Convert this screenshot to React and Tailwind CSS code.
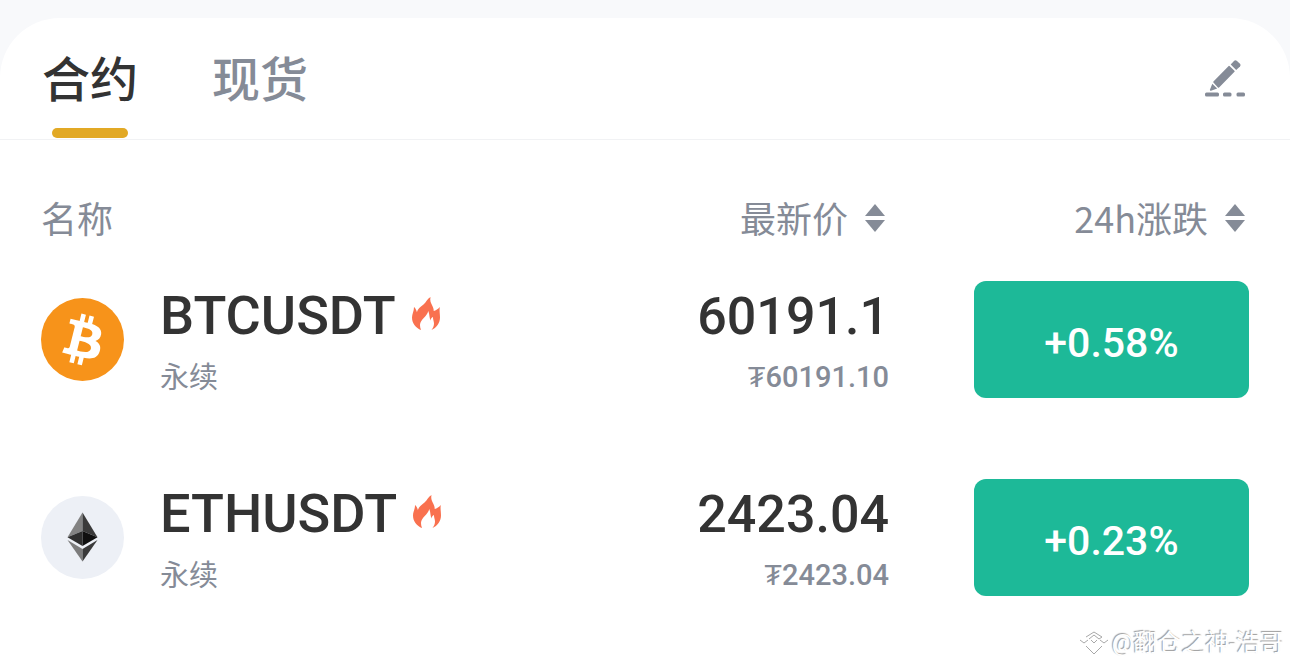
import { useState } from 'react';

const TABS = ['合约', '现货'];

const PAIRS = [
  { symbol: 'BTCUSDT', type: '永续', price: '60191.1', usdt: '₮60191.10', change: '+0.58%', Icon: BtcIcon },
  { symbol: 'ETHUSDT', type: '永续', price: '2423.04', usdt: '₮2423.04', change: '+0.23%', Icon: EthIcon },
];

function BtcIcon() {
  return (
    <svg viewBox="0 0 32 32" className="size-[83px] shrink-0" aria-hidden="true">
      <circle cx="16" cy="16" r="16" fill="#f7931a" />
      <path
        fill="#fff"
        d="M23.189 14.02c.314-2.096-1.283-3.223-3.465-3.975l.708-2.84-1.728-.43-.69 2.765c-.454-.114-.92-.22-1.385-.326l.695-2.783L15.596 6l-.708 2.839c-.376-.086-.746-.17-1.104-.26l.002-.009-2.384-.595-.46 1.846s1.283.294 1.256.312c.7.175.826.638.805 1.006l-.806 3.235c.048.012.11.03.18.057l-.183-.045-1.13 4.532c-.086.212-.303.531-.793.41.018.025-1.256-.313-1.256-.313l-.858 1.978 2.25.561c.418.105.828.215 1.231.318l-.715 2.872 1.727.43.708-2.84c.472.127.93.245 1.378.357l-.706 2.828 1.728.43.715-2.866c2.948.558 5.164.333 6.097-2.333.752-2.146-.037-3.385-1.588-4.192 1.13-.26 1.98-1.003 2.207-2.538zm-3.95 5.538c-.533 2.147-4.148.986-5.32.695l.95-3.805c1.172.293 4.929.872 4.37 3.11zm.535-5.569c-.487 1.953-3.495.96-4.47.717l.86-3.45c.975.243 4.118.696 3.61 2.733z"
      />
    </svg>
  );
}

function EthIcon() {
  return (
    <svg viewBox="0 0 83 83" className="size-[83px] shrink-0" aria-hidden="true">
      <circle cx="41.5" cy="41.5" r="41.5" fill="#edf0f6" />
      <path d="M41.5 16.5 26.5 41.3 41.5 35z" fill="#828282" />
      <path d="M41.5 16.5 56.5 41.3 41.5 35z" fill="#3a3a3a" />
      <path d="M26.5 41.3 41.5 35v15z" fill="#2f2f2f" />
      <path d="M56.5 41.3 41.5 35v15z" fill="#101010" />
      <path d="M26.5 44 41.5 53v12.5z" fill="#7c7c7c" />
      <path d="M56.5 44 41.5 53v12.5z" fill="#3a3a3a" />
    </svg>
  );
}

function FlameIcon() {
  return (
    <svg viewBox="0 0 28 34" className="mb-1 h-[34px] w-7 shrink-0" fill="#f9714f" aria-hidden="true">
      <path d="M18.500 0c-.8 3.500.4 6 1.700 8.500 1 2 1.500 3.600 1.500 5.500 2.200-.6 4.300-2 6.100-4-.6 3.500.2 6.500.2 10.500 0 5.500-3.500 10.500-8.500 12.500 1.500-2 2.500-4 2.500-6.500 0-2.200-1.200-4-1-6.500-1.400.6-2.200 1.800-2.400 3.500-1.300-2.300-.8-5.500-2.300-9.500-1.300 5.500-8 8.500-8.300 14 0 1.800.3 3.400 1 5C4 31 0 26.500 0 20.500c0-3.800 2-6 2-10.500 1.600 1.400 2.500 3.200 2.900 5.300.6-3.300 3.600-5.300 6.600-7.800C14 5.500 15.500 1.500 18.500 0z" />
    </svg>
  );
}

function EditIcon() {
  return (
    <svg viewBox="0 0 40 40" className="size-10" fill="#858b97" aria-hidden="true">
      <path d="M9 23 24 7.700 28.900 12.300 13.500 28z" stroke="#858b97" strokeWidth="1.600" strokeLinejoin="round" />
      <path d="M25.700 5.500 29.200 1.700Q30.400 .6 31.700 1.700L35 4.800Q36.200 6 35 7.400L31.200 10.900z" />
      <path d="M7.300 24.800 12.200 29.500 6 31.800Q4.600 32.100 5 30.600z" />
      <rect x="0" y="33.500" width="14" height="4" rx="1.500" />
      <rect x="18" y="33.500" width="8.500" height="4" rx="1.500" />
      <rect x="31.500" y="33.500" width="8.500" height="4" rx="1.500" />
    </svg>
  );
}

function SortIcon() {
  return (
    <svg viewBox="0 0 20 30" className="h-[30px] w-5" fill="#858b97" aria-hidden="true">
      <path d="M10 2 20 14H0z" />
      <path d="M10 30 0 18h20z" />
    </svg>
  );
}

function SortButton({ label }) {
  return (
    <button type="button" className="mr-1 inline-flex items-center gap-[17px] align-top">
      {label}
      <SortIcon />
    </button>
  );
}

function Watermark() {
  return (
    <div className="absolute right-1.5 bottom-1 flex items-center gap-1 text-2xl leading-9 text-white [text-shadow:-1px_-1px_1px_#9a9a9a]">
      <svg viewBox="0 0 28 24" className="h-6 w-7" fill="none" stroke="#a8a8a8" aria-hidden="true">
        <path d="M6 6 14 1l8 5-3 2-5-4-5 4M0 9l4 3 4-3M20 9l4 3 4-3M11 9l3 3 3-3M6 15l8 8 8-8" />
      </svg>
      <span>@翻仓之神-浩哥</span>
    </div>
  );
}

export default function App() {
  const [activeTab, setActiveTab] = useState('合约');

  return (
    <div className="relative flex min-h-screen flex-col bg-[#f8f9fb] pt-[18px] font-['Roboto','Noto_Sans_CJK_SC',sans-serif] text-[#333333]">
      <main className="flex-1 rounded-t-[60px] bg-white">
        <header className="flex items-center justify-between border-b border-[#f1f2f4] pr-[45px] pl-[42px]">
          <nav className="flex gap-[74px]">
            {TABS.map((tab) => (
              <button
                key={tab}
                type="button"
                onClick={() => setActiveTab(tab)}
                className={`flex flex-col items-center pt-[27px] text-5xl/[72px] font-medium ${activeTab === tab ? 'text-[#333333]' : 'text-[#858b97]'}`}
              >
                {tab}
                <span className={`mt-[11px] mb-px h-[10px] w-[76px] rounded-full ${activeTab === tab ? 'bg-[#e2a925]' : 'bg-transparent'}`} />
              </button>
            ))}
          </nav>
          <button type="button" aria-label="编辑">
            <EditIcon />
          </button>
        </header>

        <table className="w-full">
          <thead>
            <tr className="font-['Noto_Sans_CJK_SC',sans-serif] text-[36px]/[44px] text-[#858b97]">
              <th className="pt-[55px] pb-px pl-[41px] text-left font-normal">名称</th>
              <th className="pt-[55px] pb-px text-right font-normal">
                <SortButton label="最新价" />
              </th>
              <th className="w-[401px] pt-[55px] pr-[41px] pb-px text-right font-normal">
                <SortButton label="24h涨跌" />
              </th>
            </tr>
          </thead>
          <tbody>
            {PAIRS.map(({ symbol, type, price, usdt, change, Icon }) => (
              <tr key={symbol}>
                <td className="pt-[41px] pb-10 pl-[41px]">
                  <div className="flex items-center gap-9">
                    <Icon />
                    <div className="flex flex-col gap-[10px] pt-0.5">
                      <div className="flex items-center gap-4 text-[54px]/[64px] font-medium">
                        {symbol}
                        <FlameIcon />
                      </div>
                      <div className="text-[29px]/[40px] text-[#858b97]">{type}</div>
                    </div>
                  </div>
                </td>
                <td className="pt-[41px] pb-10 text-right">
                  <div className="flex flex-col gap-2 pt-0.5">
                    <div className="text-[52px]/[64px] font-medium">{price}</div>
                    <div className="text-[29px]/[40px] font-medium text-[#858b97]">{usdt}</div>
                  </div>
                </td>
                <td className="pt-[41px] pr-[41px] pb-10">
                  <div className="ml-auto flex h-[117px] w-[275px] items-center justify-center rounded-xl bg-[#1db998] pt-1.5 text-[41px]/[48px] font-medium text-white">
                    {change}
                  </div>
                </td>
              </tr>
            ))}
          </tbody>
        </table>
      </main>
      <Watermark />
    </div>
  );
}
